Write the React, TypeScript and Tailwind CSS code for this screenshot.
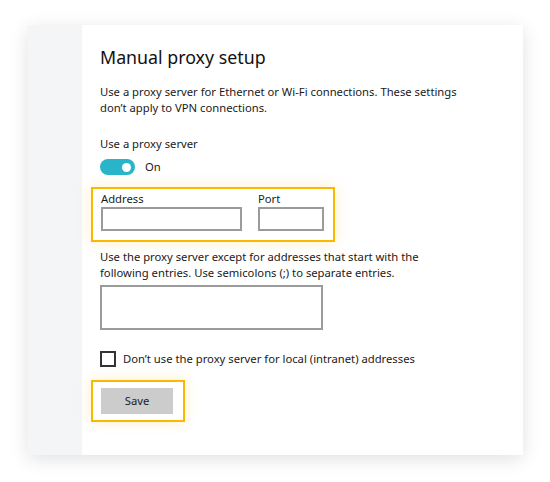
export default function App() {
  const font = { fontFamily: '"Noto Sans", "Open Sans", sans-serif' };
  return (
    <div className="h-[482px] w-[550px] bg-white pl-[28px] pt-[25px]" style={font}>
      <div className="flex h-[430px] w-[495px] shadow-[0_4px_18px_rgba(0,0,0,0.12)]">
        <div className="w-[54px] bg-[#f3f5f7]" />
        <div className="flex-1 bg-white pl-[18px] pt-[20px] text-[11.25px] leading-[16px] text-[#1a1a1a]">
          <h1 className="text-[17.8px] leading-[24px] font-normal text-[#111]">Manual proxy setup</h1>

          <p className="mt-[15px] whitespace-nowrap">
            Use a proxy server for Ethernet or Wi-Fi connections. These settings
            <br />
            don’t apply to VPN connections.
          </p>

          <p className="mt-[20px]">Use a proxy server</p>

          <div className="mt-[7px] flex items-center gap-[10px]">
            <div className="flex h-[16px] w-[35px] items-center justify-end rounded-full bg-[#29b4c9] pr-[4px]">
              <div className="h-[9px] w-[9px] rounded-full bg-white" />
            </div>
            <span>On</span>
          </div>

          <div className="-ml-[9px] mt-[12px] flex w-[244px] gap-[16px] border-2 border-[#fbb800] px-[8px] pb-[9px] pt-[2px] shadow-[0_0_14px_rgba(251,184,0,0.22)]">
            <div className="flex flex-col">
              <span className="leading-[16px]">Address</span>
              <div className="h-[24px] w-[141px] border-2 border-[#9b9b9b] bg-white" />
            </div>
            <div className="flex flex-col">
              <span className="leading-[16px]">Port</span>
              <div className="h-[24px] w-[66px] border-2 border-[#9b9b9b] bg-white" />
            </div>
          </div>

          <p className="mt-[7px] whitespace-nowrap">
            Use the proxy server except for addresses that start with the
            <br />
            following entries. Use semicolons (;) to separate entries.
          </p>

          <div className="mt-[4px] h-[45px] w-[223px] border-2 border-[#9b9b9b] bg-white" />

          <div className="mt-[21px] flex items-center gap-[7px]">
            <div className="h-[16px] w-[16px] border-2 border-[#333]" />
            <span>Don’t use the proxy server for local (intranet) addresses</span>
          </div>

          <div className="-ml-[9px] mt-[13px] w-[94px] border-2 border-[#fbb800] px-[8px] py-[6px] shadow-[0_0_14px_rgba(251,184,0,0.22)]">
            <div className="flex h-[26px] w-[72px] items-center justify-center bg-[#cccccc]">Save</div>
          </div>
        </div>
      </div>
    </div>
  );
}
